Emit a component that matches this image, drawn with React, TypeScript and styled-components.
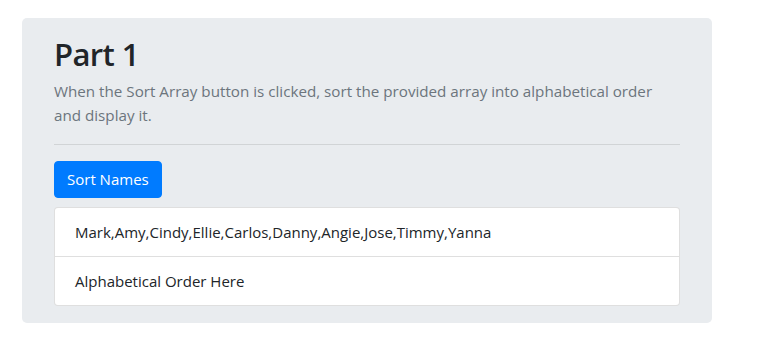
import React from "react";
import styled, { createGlobalStyle } from "styled-components";

const Global = createGlobalStyle`
  html, body { margin: 0; padding: 0; background: #fff; }
  body {
    font-family: "Open Sans", "Noto Sans", sans-serif;
    font-size: 15px;
    line-height: 24px;
    color: #212529;
  }
  * { box-sizing: border-box; }
`;

const Page = styled.div`
  padding: 18px 0 0 22px;
`;

const Jumbotron = styled.div`
  width: 690px;
  background: #e9ecef;
  border-radius: 5px;
  padding: 16px 32px 17px;
`;

const Title = styled.h1`
  margin: 2px 0 6px;
  font-size: 31px;
  font-weight: 600;
  letter-spacing: -0.6px;
  line-height: 1.2;
  color: #212529;
`;

const Lead = styled.p`
  margin: 0 0 17px;
  font-size: 15.2px;
  line-height: 24px;
  color: #6c757d;
`;

const Divider = styled.hr`
  margin: 0 0 16px;
  border: 0;
  border-top: 1px solid rgba(0, 0, 0, 0.1);
`;

const Button = styled.button`
  display: inline-block;
  font-family: inherit;
  font-size: 15px;
  line-height: 23px;
  padding: 6px 12px;
  color: #fff;
  background: #007bff;
  border: 1px solid #007bff;
  border-radius: 4px;
  cursor: pointer;
  margin-bottom: 9px;
`;

const ListGroup = styled.ul`
  list-style: none;
  margin: 0;
  padding: 0;
  background: #fff;
  border: 1px solid rgba(0, 0, 0, 0.125);
  border-radius: 4px;
`;

const ListItem = styled.li`
  padding: 12px 20px;
  line-height: 24px;
  & + & {
    border-top: 1px solid rgba(0, 0, 0, 0.125);
  }
`;

export default function App() {
  return (
    <Page>
      <Global />
      <Jumbotron>
        <Title>Part 1</Title>
        <Lead>
          When the Sort Array button is clicked, sort the provided array into alphabetical order
          and display it.
        </Lead>
        <Divider />
        <Button>Sort Names</Button>
        <ListGroup>
          <ListItem>Mark,Amy,Cindy,Ellie,Carlos,Danny,Angie,Jose,Timmy,Yanna</ListItem>
          <ListItem>Alphabetical Order Here</ListItem>
        </ListGroup>
      </Jumbotron>
    </Page>
  );
}
